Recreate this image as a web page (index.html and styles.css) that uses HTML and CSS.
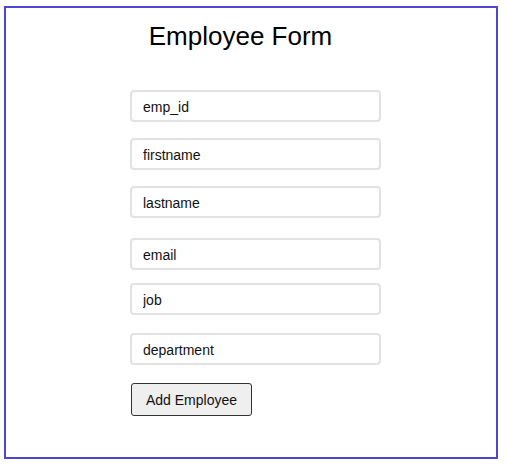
FILE: index.html
```html
<!DOCTYPE html>
<html>
<head>
<meta charset="utf-8">
<link rel="stylesheet" href="styles.css">
</head>
<body>
<div class="page">
  <h1 class="title">Employee Form</h1>
  <form class="form">
    <input class="field" type="text" placeholder="emp_id">
    <input class="field gap-16" type="text" placeholder="firstname">
    <input class="field gap-16" type="text" placeholder="lastname">
    <input class="field gap-20" type="text" placeholder="email">
    <input class="field gap-13" type="text" placeholder="job">
    <input class="field gap-18" type="text" placeholder="department">
    <button class="btn gap-18" type="button">Add Employee</button>
  </form>
</div>
</body>
</html>
```

FILE: styles.css
```css
html, body {
  margin: 0;
  padding: 0;
  background: #ffffff;
  font-family: "Liberation Sans", Arial, sans-serif;
}
.page {
  margin: 6px 9px 6px 4px;
  height: 449px;
  border: 2px solid #4e45d4;
  box-sizing: content-box;
}
.title {
  margin: 0;
  padding: 13px 21px 0 0;
  font-size: 26px;
  line-height: 30px;
  font-weight: normal;
  text-align: center;
  color: #000;
}
.form {
  display: flex;
  flex-direction: column;
  align-items: flex-start;
  padding-left: 124px;
  margin-top: 39px;
}
.field {
  box-sizing: border-box;
  width: 251px;
  height: 32px;
  margin: 0;
  padding: 2px 11px 0;
  border: 2px solid #e2e2e2;
  border-radius: 4px;
  font-family: "Liberation Sans", Arial, sans-serif;
  font-size: 14px;
  color: #111;
  background: #fff;
  outline: none;
}
.field::placeholder {
  color: #111;
  opacity: 1;
}
.gap-13 { margin-top: 13px; }
.gap-16 { margin-top: 16px; }
.gap-18 { margin-top: 18px; }
.gap-20 { margin-top: 20px; }
.btn {
  margin-left: 1px;
  box-sizing: border-box;
  width: 121px;
  height: 33px;
  padding: 0;
  border: 1px solid #333;
  border-radius: 3px;
  background: #efefef;
  font-family: "Liberation Sans", Arial, sans-serif;
  font-size: 14px;
  color: #111;
}
```
